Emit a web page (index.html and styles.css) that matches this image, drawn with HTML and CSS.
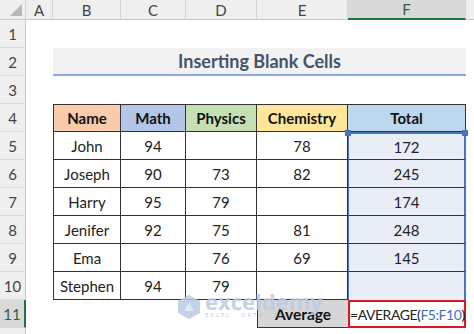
FILE: index.html
```html
<!DOCTYPE html>
<html>
<head>
<meta charset="utf-8">
<link rel="stylesheet" href="styles.css">
</head>
<body>
<div class="sheet">
  <div class="corner"><span class="tri"></span></div>
  <div class="ch">A</div>
  <div class="ch">B</div>
  <div class="ch">C</div>
  <div class="ch">D</div>
  <div class="ch">E</div>
  <div class="ch ch-sel">F</div>
  <div class="ch ch-last"></div>

  <div class="rh">1</div><div class="span7"></div>

  <div class="rh">2</div><div></div><div class="title">Inserting Blank Cells</div><div></div>

  <div class="rh">3</div><div class="span7"></div>

  <div class="rh">4</div><div></div>
  <div class="td th first top name">Name</div>
  <div class="td th top math">Math</div>
  <div class="td th top phys">Physics</div>
  <div class="td th top chem">Chemistry</div>
  <div class="td th top total">Total</div>
  <div></div>

  <div class="rh">5</div><div></div>
  <div class="td first">John</div><div class="td">94</div><div class="td"></div><div class="td">78</div><div class="td sel sel-top">172</div>
  <div></div>

  <div class="rh">6</div><div></div>
  <div class="td first">Joseph</div><div class="td">90</div><div class="td">73</div><div class="td">82</div><div class="td sel">245</div>
  <div></div>

  <div class="rh">7</div><div></div>
  <div class="td first">Harry</div><div class="td">95</div><div class="td">79</div><div class="td"></div><div class="td sel">174</div>
  <div></div>

  <div class="rh">8</div><div></div>
  <div class="td first">Jenifer</div><div class="td">92</div><div class="td">75</div><div class="td">81</div><div class="td sel">248</div>
  <div></div>

  <div class="rh">9</div><div></div>
  <div class="td first">Ema</div><div class="td"></div><div class="td">76</div><div class="td">69</div><div class="td sel">145</div>
  <div></div>

  <div class="rh">10</div><div></div>
  <div class="td first">Stephen</div><div class="td">94</div><div class="td">79</div><div class="td"></div><div class="td sel sel-bottom"></div>
  <div></div>

  <div class="rh rh-sel">11</div><div class="span4"></div>
  <div class="avg">Average</div>
  <div class="formula">=AVERAGE(<span class="ref">F5:F10</span>)</div>
  <div></div>

  <div class="rh rh-end"></div><div class="span7"></div>

  <div class="watermark">
    <svg class="wm-logo" width="24" height="26" viewBox="0 0 24 26">
      <path d="M12 1 L23 7 L23 19 L12 25 L1 19 L1 7 Z" fill="#b9c9e6"/>
      <path d="M7 17 L12 9 L17 17 Z" fill="#dfe7f4"/>
    </svg>
    <div class="wm-text">
      <span class="wm-big">exceldemy</span>
      <span class="wm-small">EXCEL · DATA · BI</span>
    </div>
  </div>
</div>
</body>
</html>
```

FILE: styles.css
```css
* { box-sizing: border-box; }
html, body { margin: 0; padding: 0; background: #ffffff; }
body { font-family: "Lato", "Open Sans", sans-serif; color: #1f1f1f; }

.sheet {
  position: relative;
  width: 474px;
  height: 334px;
  display: grid;
  grid-template-columns: 26px 27px 68px 65px 71px 91px 118px 1fr;
  grid-template-rows: 20px repeat(11, 28px) 1fr;
  overflow: hidden;
}

.corner {
  background: #efefef;
  border-right: 1px solid #d4d4d4;
  border-bottom: 1px solid #c8c8c8;
  position: relative;
}
.tri {
  position: absolute;
  right: 3px;
  bottom: 3px;
  width: 0;
  height: 0;
  border-left: 12px solid transparent;
  border-bottom: 12px solid #b8b8b8;
}

.ch {
  background: #efefef;
  border-right: 1px solid #d4d4d4;
  border-bottom: 1px solid #c8c8c8;
  display: flex;
  align-items: center;
  justify-content: center;
  font-size: 15px;
  color: #444;
}
.ch-sel {
  background: #d9d9d9;
  border-bottom: 2px solid #217346;
  color: #2f5f45;
}
.ch-last { border-right: none; }

.rh {
  background: #efefef;
  border-right: 1px solid #c8c8c8;
  border-bottom: 1px solid #d9d9d9;
  display: flex;
  align-items: center;
  justify-content: center;
  font-size: 15px;
  color: #444;
}
.rh-sel {
  background: #d9d9d9;
  border-right: 2px solid #217346;
  color: #2f5f45;
}
.rh-end { border-bottom: none; }

.span7 { grid-column: span 7; }
.span4 { grid-column: span 4; }

.title {
  grid-column: span 5;
  background: #f2f2f2;
  border-bottom: 2px solid #8ea9db;
  display: flex;
  align-items: center;
  justify-content: center;
  font-weight: 700;
  font-size: 18px;
  color: #44546a;
}

.td {
  border-right: 1px solid #333;
  border-bottom: 1px solid #333;
  display: flex;
  align-items: center;
  justify-content: center;
  font-size: 15px;
  color: #222;
}
.first { border-left: 1px solid #333; }
.top { border-top: 1px solid #333; }
.th { font-weight: 700; font-size: 15px; color: #111; }
.name { background: #f8cbad; }
.math { background: #b4c6e7; }
.phys { background: #c6e0b4; }
.chem { background: #ffe699; }
.total { background: #bdd7ee; }

.sel {
  background: #e9edf5;
  border-left: 1px solid #4a74c0;
  border-right: 2px solid #4a74c0;
  position: relative;
}
.sel-top { border-top: 2px solid #4a74c0; }
.sel-top::before,
.sel-top::after {
  content: "";
  position: absolute;
  top: -4px;
  width: 6px;
  height: 6px;
  background: #4a74c0;
}
.sel-top::before { left: -4px; }
.sel-top::after { right: -4px; }
.sel-bottom { border-bottom: none; }

.avg {
  background: #d6d6d6;
  border-left: 1px solid #333;
  border-bottom: 1px solid #333;
  display: flex;
  align-items: center;
  justify-content: center;
  font-weight: 700;
  font-size: 15.5px;
  color: #111;
}

.formula {
  background: #ffffff;
  border: 2px solid #e0141e;
  display: flex;
  align-items: center;
  padding-left: 0;
  font-size: 14px;
  letter-spacing: -0.45px;
  color: #222;
  white-space: nowrap;
}
.ref { color: #3f6fc0; }

.watermark {
  position: absolute;
  left: 177px;
  top: 294px;
  display: flex;
  align-items: flex-start;
  gap: 4px;
  opacity: 0.85;
  pointer-events: none;
}
.wm-logo { display: block; }
.wm-text {
  display: flex;
  flex-direction: column;
  line-height: 1;
}
.wm-big {
  font-family: "Open Sans", sans-serif;
  font-weight: 700;
  font-size: 22px;
  color: #bccbe6;
  letter-spacing: 0;
  margin-top: -4px;
}
.wm-small {
  font-family: "Open Sans", sans-serif;
  font-size: 6px;
  color: #b8c2d2;
  letter-spacing: 1.8px;
  margin-top: 0;
}
```
